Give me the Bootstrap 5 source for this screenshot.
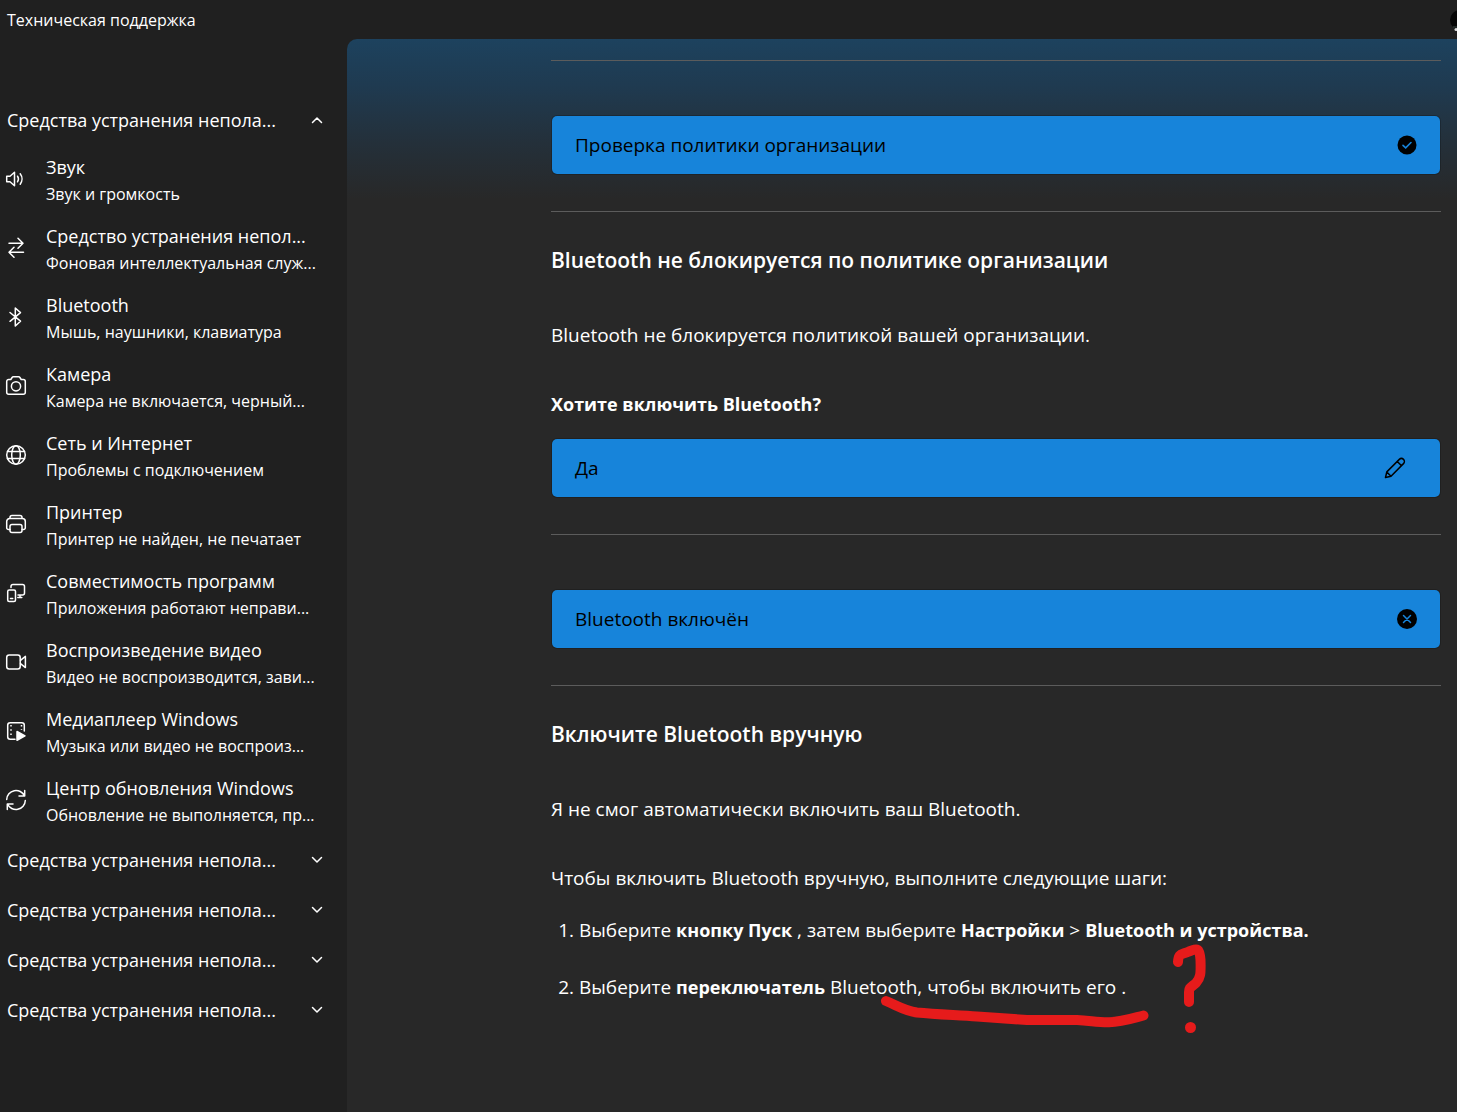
<!DOCTYPE html>
<html lang="ru" data-bs-theme="dark">
<head>
<meta charset="utf-8">
<meta name="viewport" content="width=device-width, initial-scale=1">
<title>Техническая поддержка</title>
<link href="https://cdn.jsdelivr.net/npm/bootstrap@5.3.0/dist/css/bootstrap.min.css" rel="stylesheet">
<style>
  body { background: #202020; color: #fff; font-family: "Open Sans", "Noto Sans", sans-serif; font-size: 19px; line-height: 28px; }
  .title-bar { height: 39px; font-size: 16px; padding-left: 7px; }
  .side-nav { width: 347px; padding-top: 56px; }
  .group-toggle { height: 50px; padding: 0 24px 0 7px; font-size: 18px; color: #fff; background: none; border: 0; }
  .topic { height: 69px; padding: 9px 24px 0 4px; gap: 18px; line-height: 27px; color: #fff; }
  .topic svg { margin-top: 13px; }
  .topic-name { font-size: 18px; }
  .topic-note { font-size: 16px; line-height: 26px; }
  .line-icon { fill: none; stroke: currentColor; stroke-width: 1.5; stroke-linecap: round; stroke-linejoin: round; }
  .pane { background: #282828 linear-gradient(#1d425e, #1f3a50 30%, #24303a 65%, #282828) no-repeat 0 0 / 100% 160px; border-top-left-radius: 10px; padding: 21px 16px 40px 204px; }
  .divider { height: 1px; background: #5c5c5c; }
  .status-tile { height: 60px; padding: 0 23px; color: #000; background: #1784da; background-clip: padding-box; border: 1px solid rgba(0, 0, 0, .2); border-radius: 6px; text-align: left; }
  .status-tile.editable { padding-right: 34px; }
  .gap-before { margin-top: 54px; }
  .gap-after { margin-bottom: 36px; }
  .step-title { font-size: 21px; font-weight: 600; line-height: 30px; margin: 33px 0 46px; }
  .copy { margin-bottom: 41px; }
  .question { font-size: 18px; font-weight: 700; margin-bottom: 20px; }
  .steps { padding-left: 28px; margin-top: -17px; }
  .steps li + li { margin-top: 29px; }
  .steps strong { font-size: 18px; }
  .ink { left: 319px; top: 19px; fill: none; stroke: #e61b1b; stroke-width: 10; stroke-linecap: round; stroke-linejoin: round; pointer-events: none; }
</style>
</head>
<body class="min-vh-100 d-flex flex-column">
<header class="title-bar d-flex align-items-center justify-content-between">
  <span>Техническая поддержка</span>
  <svg width="7" height="24" viewBox="0 0 7 24" aria-hidden="true"><circle cx="10" cy="12" r="10" fill="#060606"/><path d="M3 19h4" stroke="#3a4a46"/><circle cx="6" cy="21.500" r="1.500" fill="#ddd"/></svg>
</header>
<div class="d-flex flex-grow-1">
  <nav class="side-nav flex-shrink-0" aria-label="Разделы">
    <button class="group-toggle w-100 d-flex align-items-center justify-content-between" type="button" data-bs-toggle="collapse" data-bs-target="#topics" aria-expanded="true">
      <span>Средства устранения непола...</span>
      <svg class="line-icon" width="12" height="8" viewBox="0 0 12 8"><path d="M1.500 6.500 6 2l4.500 4.500"/></svg>
    </button>
    <div class="collapse show" id="topics">
      <a class="topic d-flex text-decoration-none" href="#">
        <svg class="line-icon flex-shrink-0" width="24" height="24" viewBox="0 0 24 24"><path d="M2.700 9.300H6l4.500-4v13.400l-4.500-4H2.700zM13.500 9.200a5 5 0 0 1 0 5.600M16.200 6.800a8.500 8.500 0 0 1 0 10.400"/></svg>
        <span><span class="topic-name d-block">Звук</span><span class="topic-note d-block">Звук и громкость</span></span>
      </a>
      <a class="topic d-flex text-decoration-none" href="#">
        <svg class="line-icon flex-shrink-0" width="24" height="24" viewBox="0 0 24 24"><path d="M5 7.300h14M14 2.300l5 5-5 5M19.500 16.300H5M10 11.300l-5 5 5 5"/></svg>
        <span><span class="topic-name d-block">Средство устранения непол...</span><span class="topic-note d-block">Фоновая интеллектуальная служ...</span></span>
      </a>
      <a class="topic d-flex text-decoration-none" href="#">
        <svg class="line-icon flex-shrink-0" width="24" height="24" viewBox="0 0 24 24"><path d="m6 7.500 10.500 8.700L11.300 21V3l5.200 4.600L6 16.300"/></svg>
        <span><span class="topic-name d-block">Bluetooth</span><span class="topic-note d-block">Мышь, наушники, клавиатура</span></span>
      </a>
      <a class="topic d-flex text-decoration-none" href="#">
        <svg class="line-icon flex-shrink-0" width="24" height="24" viewBox="0 0 24 24"><path d="M2.700 7.500a2 2 0 0 1 2-2h2.100l1.300-2a1.500 1.500 0 0 1 1.300-.700h5.200a1.500 1.500 0 0 1 1.300.700l1.300 2h2.100a2 2 0 0 1 2 2v10.700a2 2 0 0 1-2 2H4.700a2 2 0 0 1-2-2z"/><circle cx="12" cy="12.300" r="4.600"/></svg>
        <span><span class="topic-name d-block">Камера</span><span class="topic-note d-block">Камера не включается, черный...</span></span>
      </a>
      <a class="topic d-flex text-decoration-none" href="#">
        <svg class="line-icon flex-shrink-0" width="24" height="24" viewBox="0 0 24 24"><circle cx="12" cy="12" r="9.300"/><ellipse cx="12" cy="12" rx="4.300" ry="9.300"/><path d="M3.500 8.500h17M3.500 15.500h17"/></svg>
        <span><span class="topic-name d-block">Сеть и Интернет</span><span class="topic-note d-block">Проблемы с подключением</span></span>
      </a>
      <a class="topic d-flex text-decoration-none" href="#">
        <svg class="line-icon flex-shrink-0" width="24" height="24" viewBox="0 0 24 24"><path d="M6 17.500H4.500a1.800 1.800 0 0 1-1.800-1.800V9.500a3 3 0 0 1 3-3h12.600a3 3 0 0 1 3 3v6.200a1.800 1.800 0 0 1-1.800 1.800H18"/><path d="M6 6.300V5.500a2 2 0 0 1 2-2h8a2 2 0 0 1 2 2v.8"/><rect x="6" y="12.500" width="12" height="8" rx="2"/></svg>
        <span><span class="topic-name d-block">Принтер</span><span class="topic-note d-block">Принтер не найден, не печатает</span></span>
      </a>
      <a class="topic d-flex text-decoration-none" href="#">
        <svg class="line-icon flex-shrink-0" width="24" height="24" viewBox="0 0 24 24"><rect x="3.700" y="9" width="7.800" height="11.500" rx="1.500"/><path d="M6.500 17.500h2.200M7 6.500V5.500a2 2 0 0 1 2-2h9.500a2 2 0 0 1 2 2V12a2 2 0 0 1-2 2H14M16 14v2.500M13.800 16.500h4"/></svg>
        <span><span class="topic-name d-block">Совместимость программ</span><span class="topic-note d-block">Приложения работают неправи...</span></span>
      </a>
      <a class="topic d-flex text-decoration-none" href="#">
        <svg class="line-icon flex-shrink-0" width="24" height="24" viewBox="0 0 24 24"><rect x="2.700" y="4.900" width="13.500" height="14.200" rx="2.500"/><path d="m16.500 10.300 4.900-3.900v11.200l-4.900-3.900"/></svg>
        <span><span class="topic-name d-block">Воспроизведение видео</span><span class="topic-note d-block">Видео не воспроизводится, зави...</span></span>
      </a>
      <a class="topic d-flex text-decoration-none" href="#">
        <svg class="line-icon flex-shrink-0" width="24" height="24" viewBox="0 0 24 24"><path d="M11 20.300H6.200a2.500 2.500 0 0 1-2.500-2.500V6.200a2.500 2.500 0 0 1 2.500-2.500h11.600a2.500 2.500 0 0 1 2.500 2.500V12"/><path d="M7 6v13M17.500 6v5" stroke-dasharray="1.500 2.800" stroke-linecap="butt"/><path d="M13 12.500v8.800l8-4.400z" fill="currentColor"/></svg>
        <span><span class="topic-name d-block">Медиаплеер Windows</span><span class="topic-note d-block">Музыка или видео не воспроиз...</span></span>
      </a>
      <a class="topic d-flex text-decoration-none" href="#">
        <svg class="line-icon flex-shrink-0" width="24" height="24" viewBox="0 0 24 24"><path d="M2.700 11.500A9.300 9.300 0 0 1 20.500 8M20.700 2.500V8H15M21.300 12.500A9.300 9.300 0 0 1 3.500 16M3.300 21.500V16H9"/></svg>
        <span><span class="topic-name d-block">Центр обновления Windows</span><span class="topic-note d-block">Обновление не выполняется, пр...</span></span>
      </a>
    </div>
    <button class="group-toggle w-100 d-flex align-items-center justify-content-between" type="button" aria-expanded="false">
      <span>Средства устранения непола...</span>
      <svg class="line-icon" width="12" height="8" viewBox="0 0 12 8"><path d="M1.500 1.500 6 6l4.500-4.500"/></svg>
    </button>
    <button class="group-toggle w-100 d-flex align-items-center justify-content-between" type="button" aria-expanded="false">
      <span>Средства устранения непола...</span>
      <svg class="line-icon" width="12" height="8" viewBox="0 0 12 8"><path d="M1.500 1.500 6 6l4.500-4.500"/></svg>
    </button>
    <button class="group-toggle w-100 d-flex align-items-center justify-content-between" type="button" aria-expanded="false">
      <span>Средства устранения непола...</span>
      <svg class="line-icon" width="12" height="8" viewBox="0 0 12 8"><path d="M1.500 1.500 6 6l4.500-4.500"/></svg>
    </button>
    <button class="group-toggle w-100 d-flex align-items-center justify-content-between" type="button" aria-expanded="false">
      <span>Средства устранения непола...</span>
      <svg class="line-icon" width="12" height="8" viewBox="0 0 12 8"><path d="M1.500 1.500 6 6l4.500-4.500"/></svg>
    </button>
  </nav>
  <main class="pane flex-grow-1">
    <div class="divider"></div>
    <div class="status-tile gap-before gap-after d-flex align-items-center justify-content-between">
      <span>Проверка политики организации</span>
      <svg width="20" height="20" viewBox="0 0 20 20" aria-hidden="true"><circle cx="10" cy="10" r="9.500"/><path d="m6 10.300 2.700 2.600L14 7.500" fill="none" stroke="#1784da" stroke-width="1.600" stroke-linecap="round"/></svg>
    </div>
    <div class="divider"></div>
    <h2 class="step-title">Bluetooth не блокируется по политике организации</h2>
    <p class="copy">Bluetooth не блокируется политикой вашей организации.</p>
    <p class="question" id="ask">Хотите включить Bluetooth?</p>
    <button class="status-tile editable gap-after w-100 d-flex align-items-center justify-content-between" type="button" aria-describedby="ask">
      <span>Да</span>
      <svg class="line-icon" width="22" height="22" viewBox="0 0 22 22" aria-hidden="true"><path d="M1.500 20.500l1.300-5.600L15.300 2.400a2.900 2.900 0 0 1 4.200 4.200L7 19.200zM13.300 4.500l4.200 4.200M2.800 15l4.200 4.200"/></svg>
    </button>
    <div class="divider"></div>
    <div class="status-tile gap-before gap-after d-flex align-items-center justify-content-between">
      <span>Bluetooth включён</span>
      <svg width="20" height="20" viewBox="0 0 20 20" aria-hidden="true"><circle cx="10" cy="10" r="10"/><path d="m6.500 6.500 7 7M13.500 6.500l-7 7" fill="none" stroke="#1784da" stroke-width="1.500" stroke-linecap="round"/></svg>
    </div>
    <div class="divider"></div>
    <h2 class="step-title">Включите Bluetooth вручную</h2>
    <p class="copy">Я не смог автоматически включить ваш Bluetooth.</p>
    <p class="copy">Чтобы включить Bluetooth вручную, выполните следующие шаги:</p>
    <div class="position-relative">
      <ol class="steps mb-0">
        <li>Выберите <strong>кнопку Пуск</strong> , затем выберите <strong>Настройки</strong> &gt; <strong>Bluetooth и устройства.</strong></li>
        <li>Выберите <strong>переключатель</strong> Bluetooth, чтобы включить его .</li>
      </ol>
      <svg class="ink position-absolute" width="345" height="105" viewBox="870 935 345 105" aria-hidden="true">
        <path d="M886 1001C898 1006 905 1011 917 1012.500C937 1014.500 957 1015 977 1016.500L1027 1020H1077C1090 1020.500 1097 1022.500 1109 1022.300C1122 1022 1132 1018.500 1143.500 1015.500"/>
        <path d="M1178 962C1178.500 953 1181 955 1189 951.500C1198 948 1199.500 948 1200.500 960C1201 974 1200.500 978 1196 983C1190 988 1189 988 1189 992V1002"/>
        <circle cx="1190.500" cy="1027.500" r="5.500" fill="#e61b1b" stroke="none"/>
      </svg>
    </div>
  </main>
</div>
<script src="https://cdn.jsdelivr.net/npm/bootstrap@5.3.0/dist/js/bootstrap.bundle.min.js"></script>
</body>
</html>
